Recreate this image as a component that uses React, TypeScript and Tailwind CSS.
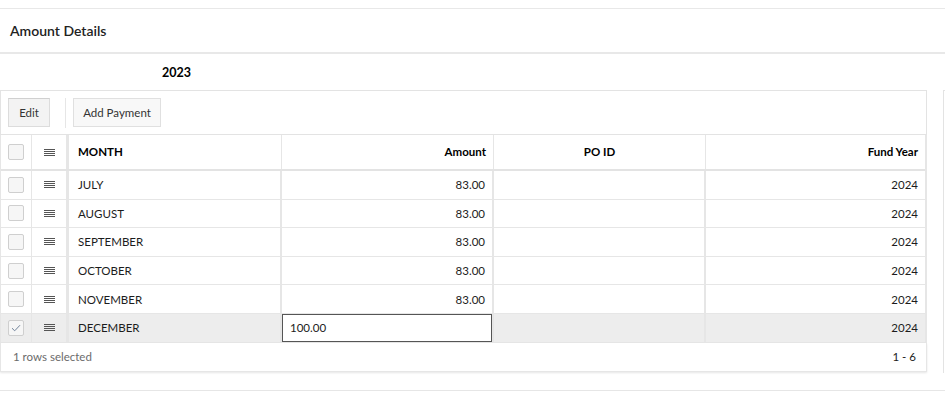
import React from 'react';

type Row = { month: string; amount: string; fundYear: string; selected?: boolean };

const rows: Row[] = [
  { month: 'JULY', amount: '83.00', fundYear: '2024' },
  { month: 'AUGUST', amount: '83.00', fundYear: '2024' },
  { month: 'SEPTEMBER', amount: '83.00', fundYear: '2024' },
  { month: 'OCTOBER', amount: '83.00', fundYear: '2024' },
  { month: 'NOVEMBER', amount: '83.00', fundYear: '2024' },
  { month: 'DECEMBER', amount: '100.00', fundYear: '2024', selected: true },
];

const Checkbox: React.FC<{ checked?: boolean }> = ({ checked }) => (
  <span className="flex h-[16px] w-[16px] items-center justify-center rounded-[2px] border border-[#cfcfcf] bg-[#f6f6f6]">
    {checked && (
      <svg width="10" height="8" viewBox="0 0 10 8" fill="none">
        <path d="M1 4.2L3.7 6.8L9 1.2" stroke="#71839a" strokeWidth="1" />
      </svg>
    )}
  </span>
);

const DragHandle = () => (
  <svg width="11" height="7" viewBox="0 0 11 7">
    <rect x="0" y="0" width="11" height="1" fill="#555" />
    <rect x="0" y="2" width="11" height="1" fill="#555" />
    <rect x="0" y="4" width="11" height="1" fill="#555" />
    <rect x="0" y="6" width="11" height="1" fill="#555" />
  </svg>
);

export default function App() {
  return (
    <div className="h-[395px] w-[945px] overflow-hidden bg-white font-['Lato',sans-serif] text-[#1c1c1c]">
      <div className="h-[8px]" />

      {/* Section header */}
      <div className="flex h-[46px] items-center border-t border-b-2 border-[#e8e8e8] px-[10px] text-[14px] font-semibold text-[#222]">
        Amount Details
      </div>

      {/* Year */}
      <div className="flex h-[36px] items-center pl-[162px] pt-[2px] text-[12.5px] font-bold text-black">2023</div>

      <div className="flex items-start">
        <div className="w-[927px]">
          {/* Toolbar */}
          <div className="flex h-[45px] items-center border border-[#e3e3e3] pl-[7px] text-[11.5px] text-[#333]">
            <button className="h-[29px] w-[42px] border border-[#dcdcdc] border-t-[#d0d0d0] bg-[#f3f3f3]">Edit</button>
            <span className="ml-[15px] h-[30px] w-px bg-[#e6e6e6]" />
            <button className="ml-[7px] h-[29px] w-[88px] border border-[#e0e0e0] bg-[#f8f8f8]">Add Payment</button>
          </div>

          {/* Grid */}
          <div className="border-l border-r-2 border-[#e6e6e6] text-[11.5px]">
            <div className="flex h-[36px] border-b-2 border-[#e3e3e3] font-bold text-black">
              <div className="flex w-[31px] items-center justify-center border-r border-[#e6e6e6]">
                <Checkbox />
              </div>
              <div className="flex w-[37px] items-center justify-center border-r-[3px] border-[#e6e6e6]">
                <DragHandle />
              </div>
              <div className="flex w-[213px] items-center border-r border-[#e6e6e6] pl-[9px]">MONTH</div>
              <div className="flex w-[212px] items-center justify-end border-r border-[#e6e6e6] pr-[7px]">Amount</div>
              <div className="flex w-[212px] items-center justify-center border-r border-[#e6e6e6]">PO ID</div>
              <div className="flex w-[219px] items-center justify-end pr-[7px]">Fund Year</div>
            </div>

            {rows.map((r) => (
              <div
                key={r.month}
                className={`flex h-[28.6px] border-b border-[#e6e6e6] ${r.selected ? 'bg-[#ededed]' : 'bg-white'}`}
              >
                <div className="flex w-[31px] items-center justify-center border-r border-[#e6e6e6]">
                  <Checkbox checked={r.selected} />
                </div>
                <div className="flex w-[37px] items-center justify-center border-r-[3px] border-[#e6e6e6]">
                  <DragHandle />
                </div>
                <div className="flex w-[213px] items-center border-r-2 border-[#e6e6e6] pl-[9px]">{r.month}</div>
                <div className="flex w-[212px] items-center justify-end border-r-2 border-[#e6e6e6]">
                  {r.selected ? (
                    <input
                      readOnly
                      value={r.amount}
                      className="h-full w-full border border-[#555] bg-white pl-[7px] text-[11.5px] text-[#1c1c1c] outline-none"
                    />
                  ) : (
                    <span className="pr-[7px]">{r.amount}</span>
                  )}
                </div>
                <div className="w-[212px] border-r-2 border-[#e6e6e6]" />
                <div className="flex w-[219px] items-center justify-end pr-[7px]">{r.fundYear}</div>
              </div>
            ))}
          </div>

          {/* Footer */}
          <div className="flex h-[29px] items-center justify-between border-x border-b border-[#e6e6e6] pl-[12px] pr-[10px] text-[11.5px] shadow-[0_1px_2px_rgba(0,0,0,0.10)]">
            <span className="text-[#6b6b6b]">1 rows selected</span>
            <span className="text-[#1c1c1c]">1 - 6</span>
          </div>
        </div>

        <div className="ml-[16px] h-[283px] flex-1 border-l border-t border-[#e3e3e3]" />
      </div>

      <div className="mt-[17px] border-t border-[#e6e6e6]" />
    </div>
  );
}
